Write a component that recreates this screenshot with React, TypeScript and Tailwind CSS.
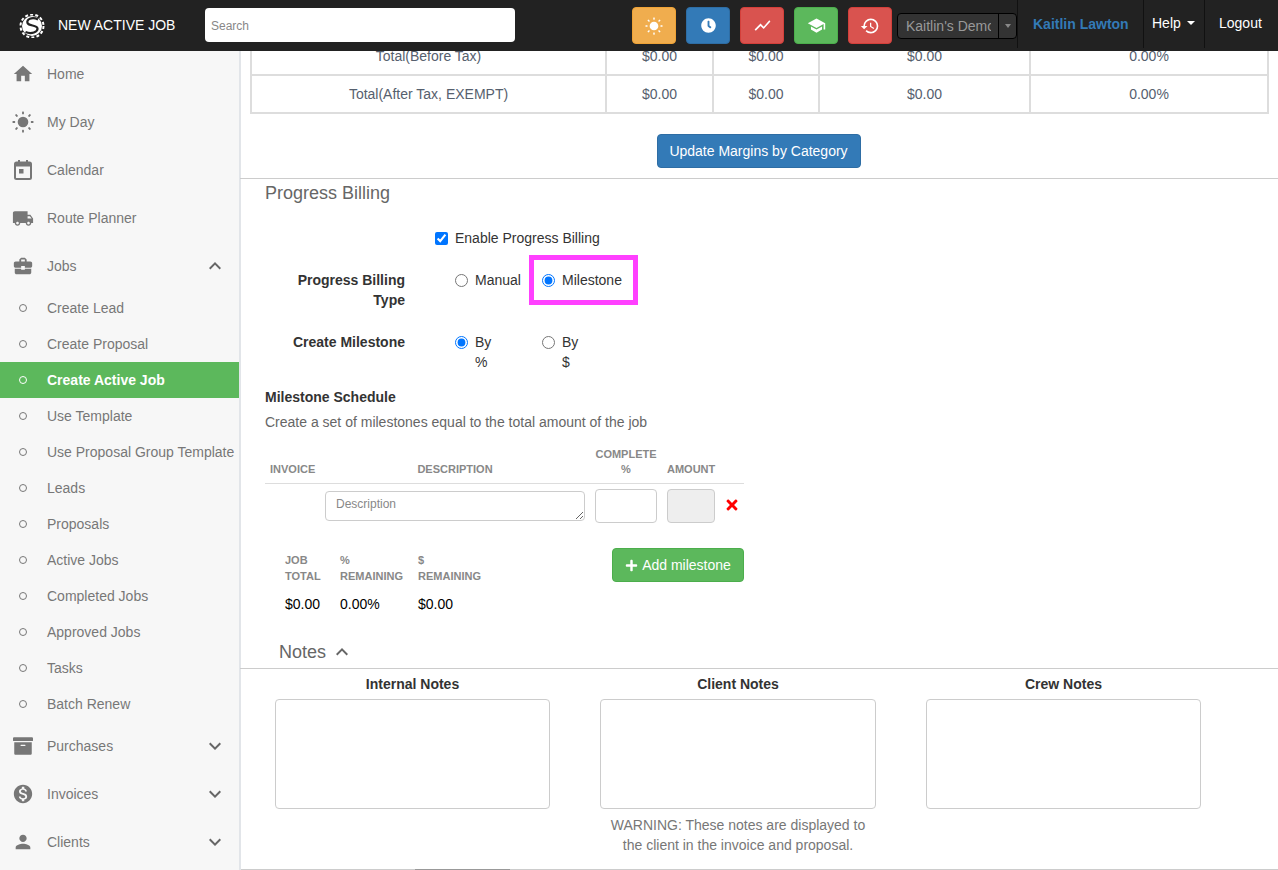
import React from "react";
import { FaArchive, FaClock, FaPlus, FaTimes } from "react-icons/fa";
import {
	MdBusinessCenter,
	MdHistory,
	MdHome,
	MdKeyboardArrowDown,
	MdKeyboardArrowUp,
	MdLocalShipping,
	MdMonetizationOn,
	MdPerson,
	MdSchool,
	MdShowChart,
} from "react-icons/md";

function SunIcon({ size }: { size: number }) {
	const rays = [0, 45, 90, 135, 180, 225, 270, 315];
	return (
		<svg width={size} height={size} viewBox="0 0 24 24" fill="currentColor">
			<circle cx="12" cy="12" r="5.8" />
			{rays.map((r) => (
				<rect key={r} x="11" y="0.5" width="2" height="3" rx="0.6" transform={`rotate(${r} 12 12)`} />
			))}
		</svg>
	);
}

function CalendarIcon() {
	return (
		<svg width="20" height="22" viewBox="0 0 20 22" fill="none">
			<rect x="2" y="3.5" width="16" height="16.5" rx="1.5" stroke="#777" strokeWidth="2" />
			<rect x="2" y="3.5" width="16" height="4" fill="#777" />
			<rect x="5" y="1" width="2" height="4" fill="#777" />
			<rect x="13" y="1" width="2" height="4" fill="#777" />
			<rect x="6" y="10" width="4.5" height="4.5" fill="#777" />
		</svg>
	);
}

function Logo() {
	return (
		<svg width="28" height="24" viewBox="0 0 28 24" className="block">
			<circle cx="14" cy="12" r="10" fill="#fff" />
			<circle cx="14" cy="12" r="11.5" fill="none" stroke="#fff" strokeWidth="2" strokeDasharray="3 2.2" />
			<path d="M20 5.5C14 2.5 8 5.5 9.5 9c1.5 3.5 9.5 1.5 10 5.5.4 3.500-6 6-12 3.500" fill="none" stroke="#222" strokeWidth="2.200" />
		</svg>
	);
}

const subItems = [
	"Create Lead",
	"Create Proposal",
	"Create Active Job",
	"Use Template",
	"Use Proposal Group Template",
	"Leads",
	"Proposals",
	"Active Jobs",
	"Completed Jobs",
	"Approved Jobs",
	"Tasks",
	"Batch Renew",
];

function NavItem({ icon, label, arrow }: { icon: React.ReactNode; label: string; arrow?: "up" | "down" }) {
	return (
		<div className="flex items-center h-12 pl-3 pr-3 text-[#777]">
			<span className="w-[22px] flex justify-center shrink-0">{icon}</span>
			<span className="ml-[13px] flex-1">{label}</span>
			{arrow === "up" && <MdKeyboardArrowUp size={24} color="#666" />}
			{arrow === "down" && <MdKeyboardArrowDown size={24} color="#666" />}
		</div>
	);
}

function Sidebar() {
	return (
		<aside className="w-[241px] shrink-0 bg-[#f7f7f7] border-r-2 border-[#e2e5e9] overflow-hidden">
			<div className="-mt-px">
				<NavItem icon={<MdHome size={24} color="#777" />} label="Home" />
				<NavItem icon={<SunIcon size={24} />} label="My Day" />
				<NavItem icon={<CalendarIcon />} label="Calendar" />
				<NavItem icon={<MdLocalShipping size={25} color="#777" />} label="Route Planner" />
				<NavItem icon={<MdBusinessCenter size={24} color="#777" />} label="Jobs" arrow="up" />
				{subItems.map((s) => {
					const active = s === "Create Active Job";
					return (
						<div
							key={s}
							className={
								active
									? "flex items-center h-9 pl-[19px] bg-[#5cb85c] text-white font-bold"
									: "flex items-center h-9 pl-[19px] text-[#777] whitespace-nowrap"
							}
						>
							<span className={active ? "w-2 h-2 rounded-full border border-white" : "w-2 h-2 rounded-full border border-[#777]"} />
							<span className="ml-5">{s}</span>
						</div>
					);
				})}
				<NavItem icon={<FaArchive size={20} color="#777" />} label="Purchases" arrow="down" />
				<NavItem icon={<MdMonetizationOn size={24} color="#777" />} label="Invoices" arrow="down" />
				<NavItem icon={<MdPerson size={24} color="#777" />} label="Clients" arrow="down" />
			</div>
		</aside>
	);
}

function Header() {
	const btn = "w-11 h-[37px] rounded flex items-center justify-center text-white border";
	return (
		<header className="relative z-10 h-[51px] shrink-0 bg-[#222] flex items-center text-white">
			<span className="ml-[18px]">
				<Logo />
			</span>
			<span className="ml-[12px] w-[147px] whitespace-nowrap -mt-[2px]">NEW ACTIVE JOB</span>
			<input
				placeholder="Search"
				className="w-[310px] h-[34px] -mt-[1px] bg-white rounded pl-[6px] pr-[6px] pt-[2px] text-xs text-[#333] placeholder:text-[#888] outline-none"
			/>
			<div className="ml-[117px] flex items-center gap-[10px]">
				<div className={`${btn} bg-[#f0ad4e] border-[#eea236]`}>
					<SunIcon size={18} />
				</div>
				<div className={`${btn} bg-[#337ab7] border-[#2e6da4]`}>
					<FaClock size={15} />
				</div>
				<div className={`${btn} bg-[#d9534f] border-[#d43f3a]`}>
					<MdShowChart size={19} />
				</div>
				<div className={`${btn} bg-[#5cb85c] border-[#4cae4c]`}>
					<MdSchool size={19} />
				</div>
				<div className={`${btn} bg-[#d9534f] border-[#d43f3a]`}>
					<MdHistory size={20} />
				</div>
			</div>
			<div className="ml-[5px] w-[120px] h-[26px] flex items-stretch bg-[#333] border border-black rounded text-[#999]">
				<span className="w-[100px] pl-2 leading-[24px]">
					<span className="block w-[85px] overflow-hidden whitespace-nowrap">Kaitlin's Demo</span>
				</span>
				<span className="flex-1 border-l border-black flex items-center justify-center">
					<span className="border-x-[3px] border-x-transparent border-t-[4px] border-t-[#888] mt-px" />
				</span>
			</div>
			<div className="h-[48px] self-start w-[126px] border-l border-[#111] flex items-center pl-[15px] font-bold text-[#337ab7] whitespace-nowrap">
				Kaitlin Lawton
			</div>
			<div className="h-[48px] self-start w-[61px] border-l border-[#111] flex items-center pl-2 gap-[6px] pb-[2px]">
				Help
				<span className="border-x-4 border-x-transparent border-t-4 border-t-white" />
			</div>
			<div className="h-[48px] self-start flex-1 border-l border-[#111] flex items-center pl-[14px] pb-[2px]">Logout</div>
		</header>
	);
}

const totals = [
	["Total(Before Tax)", "$0.00", "$0.00", "$0.00", "0.00%"],
	["Total(After Tax, EXEMPT)", "$0.00", "$0.00", "$0.00", "0.00%"],
];

function TotalsTable() {
	const widths = ["w-[355px]", "w-[107px]", "w-[106px]", "w-[211px]", "w-[238px]"];
	return (
		<table className="-mt-[15px] ml-[9px] w-[1017px] table-fixed border-collapse text-[#56606e] text-center">
			<tbody>
				{totals.map((row) => (
					<tr key={row[0]} className="h-[38px]">
						{row.map((c, i) => (
							<td key={i} className={`${widths[i]} border-2 border-[#ddd] p-0`}>
								{c}
							</td>
						))}
					</tr>
				))}
			</tbody>
		</table>
	);
}

function Radio({ checked, label, narrow }: { checked?: boolean; label: string; narrow?: boolean }) {
	return (
		<label className="flex items-start">
			<input type="radio" defaultChecked={checked} className="w-[13px] h-[13px] mt-[4px] m-0 shrink-0" />
			<span className={narrow ? "ml-[7px] w-5 text-[#333]" : "ml-[7px] text-[#333] whitespace-nowrap"}>{label}</span>
		</label>
	);
}

function ProgressBilling() {
	const th = "text-[11px] leading-[15px] font-bold text-[#888] uppercase";
	return (
		<section>
			<h2 className="ml-[24px] mt-[1px] text-lg leading-[26px] text-[#666]">Progress Billing</h2>

			<label className="ml-[194px] mt-[22px] h-5 flex items-center text-[#333]">
				<input type="checkbox" defaultChecked className="w-[13px] h-[13px] m-0" />
				<span className="ml-[7px]">Enable Progress Billing</span>
			</label>

			<div className="mt-[22px] ml-[24px] flex">
				<div className="w-[140px] text-right font-bold text-[#333]">Progress Billing Type</div>
				<div className="ml-[50px] w-[87px]">
					<Radio label="Manual" />
				</div>
				<div className="relative">
					<Radio checked label="Milestone" />
					<div className="absolute -left-[13px] -top-[15px] w-[109px] h-[50px] border-[5px] border-[#ff40ff]" />
				</div>
			</div>

			<div className="mt-[22px] ml-[24px] flex">
				<div className="w-[140px] text-right font-bold text-[#333]">Create Milestone</div>
				<div className="ml-[50px] w-[87px]">
					<Radio checked narrow label="By %" />
				</div>
				<Radio narrow label="By $" />
			</div>

			<div className="ml-[24px] w-[479px]">
				<h3 className="mt-[15px] font-bold text-[#333]">Milestone Schedule</h3>
				<p className="mt-[5px] text-[#666]">Create a set of milestones equal to the total amount of the job</p>

				<div className="mt-[15px] flex items-end pb-[6px] border-b border-[#ddd]">
					<div className={`${th} w-[60px] pl-[5px]`}>Invoice</div>
					<div className={`${th} w-[260px] text-center`}>Description</div>
					<div className={`${th} w-[62px] ml-[10px] text-center`}>
						Complete
						<br />%
					</div>
					<div className={`${th} w-[48px] ml-[10px] text-center`}>Amount</div>
				</div>

				<div className="mt-[5px] flex items-center h-[34px]">
					<textarea
						placeholder="Description"
						className="ml-[60px] w-[260px] h-[30px] border border-[#ccc] rounded px-[10px] py-1 text-xs leading-[17px] placeholder:text-[#888] outline-none"
					/>
					<input className="ml-[10px] w-[62px] h-[34px] border border-[#ccc] rounded outline-none" />
					<input disabled className="ml-[10px] w-[48px] h-[34px] border border-[#ccc] rounded bg-[#eee]" />
					<FaTimes size={16} color="#f00" className="ml-[9px] -mt-[2px]" />
				</div>

				<div className="mt-[25px] flex items-start justify-between">
					<div className="pl-[20px] flex pt-1">
						<div className="w-[55px]">
							<div className="text-[11px] leading-4 font-bold text-[#888]">
								JOB
								<br />
								TOTAL
							</div>
							<div className="mt-[10px] text-black">$0.00</div>
						</div>
						<div className="w-[78px]">
							<div className="text-[11px] leading-4 font-bold text-[#888]">
								%
								<br />
								REMAINING
							</div>
							<div className="mt-[10px] text-black">0.00%</div>
						</div>
						<div>
							<div className="text-[11px] leading-4 font-bold text-[#888]">
								$
								<br />
								REMAINING
							</div>
							<div className="mt-[10px] text-black">$0.00</div>
						</div>
					</div>
					<button className="w-[132px] h-[34px] rounded bg-[#5cb85c] border border-[#4cae4c] text-white flex items-center justify-center gap-[4px]">
						<FaPlus size={13} />
						Add milestone
					</button>
				</div>
			</div>
		</section>
	);
}

function Notes() {
	const area = "block w-full h-[110px] border border-[#ccc] rounded outline-none resize-none mt-[5px]";
	const label = "text-center font-bold text-[#333]";
	return (
		<section>
			<div className="mt-[25px] ml-[38px] flex items-center h-[26px] text-lg text-[#666]">
				Notes
				<MdKeyboardArrowUp size={24} color="#666" className="ml-[4px]" />
			</div>
			<div className="mt-[3px] -ml-px border-t border-[#ccc]" />
			<div className="mt-[5px] ml-[34px] flex gap-[50px]">
				<div className="w-[275px]">
					<div className={label}>Internal Notes</div>
					<textarea className={area} />
				</div>
				<div className="w-[276px]">
					<div className={label}>Client Notes</div>
					<textarea className={area} />
					<p className="mt-[6px] text-center text-[#777]">WARNING: These notes are displayed to the client in the invoice and proposal.</p>
				</div>
				<div className="w-[275px]">
					<div className={label}>Crew Notes</div>
					<textarea className={area} />
				</div>
			</div>
			<div className="mt-[14px] border-t border-[#ccc]">
				<div className="-mt-px ml-[174px] w-[95px] h-px bg-[#999]" />
			</div>
		</section>
	);
}

export default function App() {
	return (
		<div className="h-[870px] flex flex-col overflow-hidden bg-white text-sm leading-5 font-['Liberation_Sans',Arial,sans-serif]">
			<Header />
			<div className="flex flex-1 min-h-0">
				<Sidebar />
				<main className="flex-1 min-w-0">
					<TotalsTable />
					<div className="mt-[20px] flex justify-center pr-[2px]">
						<button className="w-[204px] h-[34px] rounded bg-[#337ab7] border border-[#2e6da4] text-white">Update Margins by Category</button>
					</div>
					<div className="mt-[10px] -ml-px border-t border-[#ccc]" />
					<ProgressBilling />
					<Notes />
				</main>
			</div>
		</div>
	);
}
